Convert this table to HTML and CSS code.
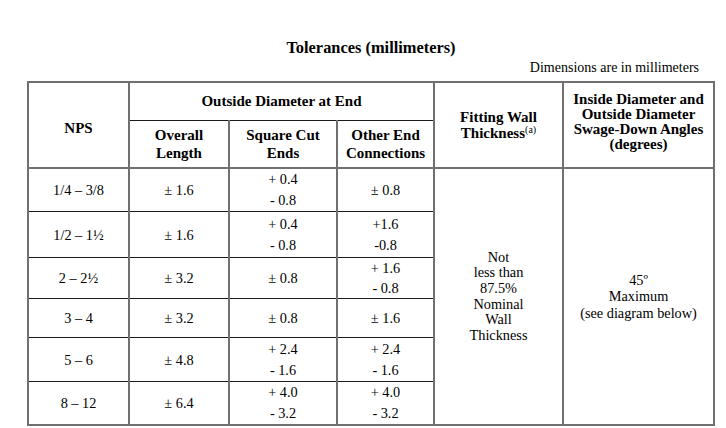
FILE: index.html
```html
<!DOCTYPE html>
<html>
<head>
<meta charset="utf-8">
<link rel="stylesheet" href="styles.css">
</head>
<body>
<div class="doc">
  <div class="title">Tolerances (millimeters)</div>
  <div class="dims">Dimensions are in millimeters</div>
  <table class="tol">
    <colgroup>
      <col class="c-nps"><col class="c-ol"><col class="c-sq"><col class="c-oe"><col class="c-fw"><col class="c-in">
    </colgroup>
    <thead>
      <tr class="h1">
        <th rowspan="2" class="nps">NPS</th>
        <th colspan="3" class="od">Outside Diameter at End</th>
        <th rowspan="2">Fitting Wall<br>Thickness<sup>(a)</sup></th>
        <th rowspan="2" class="ang-h">Inside Diameter and<br>Outside Diameter<br>Swage-Down Angles<br>(degrees)</th>
      </tr>
      <tr class="h2">
        <th class="sub">Overall<br>Length</th>
        <th class="sub">Square Cut<br>Ends</th>
        <th class="sub">Other End<br>Connections</th>
      </tr>
    </thead>
    <tbody>
      <tr class="r1">
        <td>1/4 – 3/8</td><td>± 1.6</td><td class="two">+ 0.4<br>- 0.8</td><td>± 0.8</td>
        <td rowspan="6" class="merged">Not<br>less than<br>87.5%<br>Nominal<br>Wall<br>Thickness</td>
        <td rowspan="6" class="merged angle">45º<br>Maximum<br>(see diagram below)</td>
      </tr>
      <tr class="r2">
        <td>1/2 – 1½</td><td>± 1.6</td><td class="two">+ 0.4<br>- 0.8</td><td class="two">+1.6<br>-0.8</td>
      </tr>
      <tr class="r3">
        <td>2 – 2½</td><td>± 3.2</td><td>± 0.8</td><td class="two tight">+ 1.6<br>- 0.8</td>
      </tr>
      <tr class="r4">
        <td>3 – 4</td><td>± 3.2</td><td>± 0.8</td><td>± 1.6</td>
      </tr>
      <tr class="r5">
        <td>5 – 6</td><td>± 4.8</td><td class="two">+ 2.4<br>- 1.6</td><td class="two">+ 2.4<br>- 1.6</td>
      </tr>
      <tr class="r6">
        <td>8 – 12</td><td>± 6.4</td><td class="two">+ 4.0<br>- 3.2</td><td class="two">+ 4.0<br>- 3.2</td>
      </tr>
    </tbody>
  </table>
</div>
</body>
</html>
```
FILE: styles.css
```css
html, body {
  margin: 0;
  padding: 0;
  background: #ffffff;
}
body {
  font-family: "Liberation Serif", "Times New Roman", serif;
  color: #000;
}
.doc {
  margin-left: 27px;
  width: 688px;
  padding-top: 38px;
}
.title {
  text-align: center;
  font-weight: bold;
  font-size: 16.4px;
  line-height: 19px;
}
.dims {
  text-align: right;
  font-size: 14px;
  line-height: 16px;
  margin-top: 3px;
  padding-right: 16px;
}
.tol {
  margin-top: 5px;
  border-collapse: collapse;
  table-layout: fixed;
  width: 688px;
  border: 2px solid #707070;
}
.c-nps { width: 101px; }
.c-ol { width: 100px; }
.c-sq { width: 108px; }
.c-oe { width: 97px; }
.c-fw { width: 129px; }
.c-in { width: 151px; }
.tol th, .tol td {
  padding: 0;
  text-align: center;
  vertical-align: middle;
  border-left: 2px solid #707070;
  border-right: 2px solid #707070;
}
.tol th {
  font-weight: bold;
  font-size: 15px;
  line-height: 16px;
  border-bottom: 2px solid #707070;
}
.tol th.od {
  border-bottom: 1px solid #1a1a1a;
}
.tol th.sub {
  line-height: 18px;
}
.tol th.nps {
  padding-top: 6px;
}
.tol th.ang-h {
  line-height: 15px;
  padding-bottom: 6px;
}
.tol sup {
  font-size: 10px;
  font-weight: normal;
  line-height: 0;
  vertical-align: 5px;
}
.h1 { height: 38px; }
.h2 { height: 48px; }
.tol td {
  font-size: 14.3px;
  line-height: 16px;
  border-bottom: 1px solid #1a1a1a;
}
.tol td.two {
  line-height: 21px;
}
.tol td.two.tight {
  line-height: 20px;
}
.tol td.merged {
  line-height: 15.6px;
  border-bottom: 2px solid #707070;
}
.tol td.angle {
  line-height: 16.5px;
}
.r1 { height: 43px; }
.r2 { height: 46px; }
.r3 { height: 41px; }
.r4 { height: 39px; }
.r5 { height: 44px; }
.r6 { height: 42px; }
.r6 td { border-bottom: 2px solid #707070; }
```
